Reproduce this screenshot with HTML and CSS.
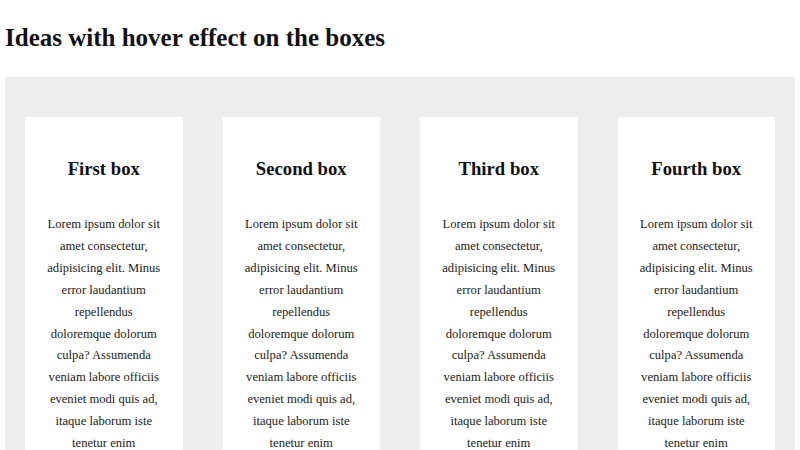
FILE: index.html
```html
<!DOCTYPE html>
<html lang="en">
<head>
    <meta charset="UTF-8">
    <meta name="viewport" content="width=device-width, initial-scale=1.0">
    <title>Hover Boxes</title>
    <link rel="stylesheet" href="styles.css">
</head>
<body>
    <h1>Ideas with hover effect on the boxes</h1>

    <div class="container">
        <div class="box">
            <h2>First box</h2>
            <p>Lorem ipsum dolor sit amet consectetur, adipisicing elit. Minus error laudantium repellendus doloremque dolorum culpa? Assumenda veniam labore officiis eveniet modi quis ad, itaque laborum iste tenetur enim voluptatibus.</p>
        </div>
        <div class="box">
            <h2>Second box</h2>
            <p>Lorem ipsum dolor sit amet consectetur, adipisicing elit. Minus error laudantium repellendus doloremque dolorum culpa? Assumenda veniam labore officiis eveniet modi quis ad, itaque laborum iste tenetur enim voluptatibus.</p>
        </div>
        <div class="box">
            <h2>Third box</h2>
            <p>Lorem ipsum dolor sit amet consectetur, adipisicing elit. Minus error laudantium repellendus doloremque dolorum culpa? Assumenda veniam labore officiis eveniet modi quis ad, itaque laborum iste tenetur enim voluptatibus.</p>
        </div>
        <div class="box">
            <h2>Fourth box</h2>
            <p>Lorem ipsum dolor sit amet consectetur, adipisicing elit. Minus error laudantium repellendus doloremque dolorum culpa? Assumenda veniam labore officiis eveniet modi quis ad, itaque laborum iste tenetur enim voluptatibus.</p>
        </div>
    </div>
</body>
</html>
```

FILE: styles.css
```css
body {
    font-family: "Liberation Serif", "Times New Roman", serif;
    color: #111;
    margin: 0;
    padding: 0 5px;
}
h1 {
    font-size: 25px;
    margin: 24px 0 25px;
}
.container {
    display: flex;
    gap: 40px;
    padding: 40px 20px;
    background-color: #ededed;
}
.box {
    flex: 1;
    background-color: #ffffff;
    padding: 20px;
    text-align: center;
    transition: transform 0.3s ease, box-shadow 0.3s ease;
}
.box:hover {
    transform: translateY(-6px);
    box-shadow: 0 6px 16px rgba(0,0,0,0.12);
}
.box h2 {
    font-size: 18.7px;
    margin: 21px 0 0;
}
.box p {
    font-size: 12.6px;
    line-height: 21.9px;
    color: #222;
    margin: 34px 0 0;
}
```
